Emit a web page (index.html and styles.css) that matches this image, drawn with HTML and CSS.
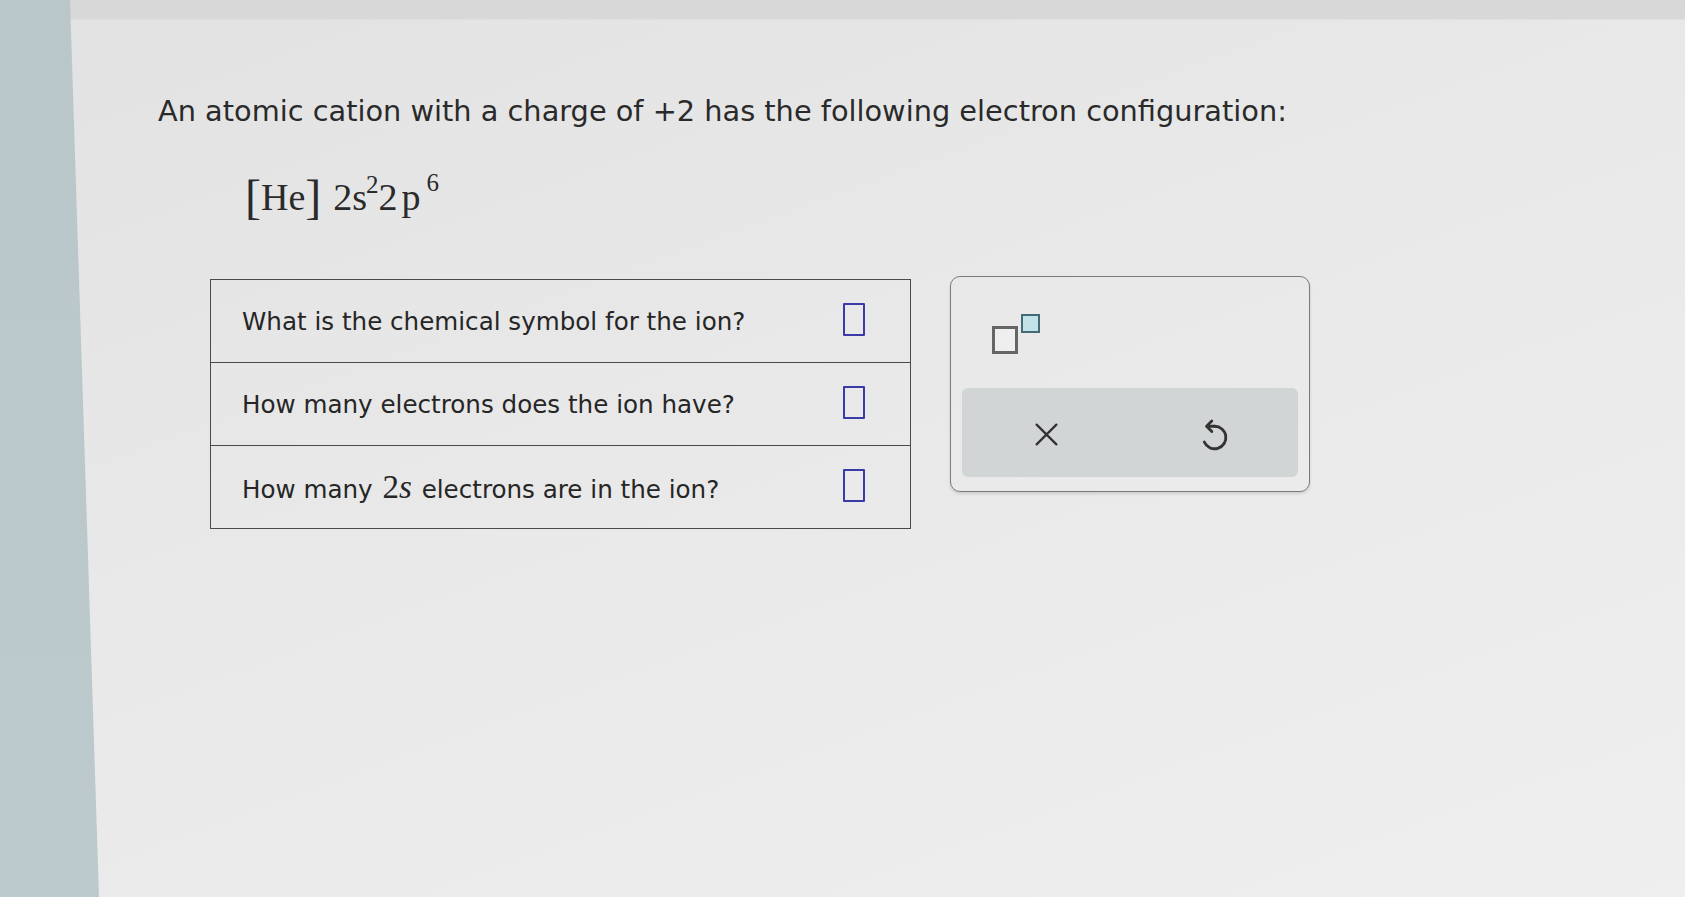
FILE: index.html
```html
<!DOCTYPE html>
<html>
<head>
<meta charset="utf-8">
<link rel="stylesheet" href="styles.css">
</head>
<body>
<div class="page">
  <div class="strip"></div>
  <div class="main">
    <div class="content">
      <p class="prompt">An atomic cation with a charge of <span class="num">+2</span> has the following electron configuration:</p>
      <div class="config"><span class="br">[</span>He<span class="br">]</span><span class="sp"></span>2s<sup>2</sup>2<span class="p">p</span><sup class="six">6</sup></div>
      <div class="work">
        <div class="qtable">
          <div class="row">
            <span class="q">What is the chemical symbol for the ion?</span>
            <span class="box"></span>
          </div>
          <div class="row">
            <span class="q">How many electrons does the ion have?</span>
            <span class="box"></span>
          </div>
          <div class="row">
            <span class="q">How many <span class="math">2<i>s</i></span> electrons are in the ion?</span>
            <span class="box"></span>
          </div>
        </div>
        <div class="panel">
          <div class="tools">
            <span class="supicon"><span class="base"></span><span class="exp"></span></span>
          </div>
          <div class="actions">
            <div class="act">
              <svg width="25" height="25" viewBox="0 0 24 24" fill="none" stroke="#333" stroke-width="2.2" stroke-linecap="round"><path d="M2.5 2.5 L21.5 21.5 M21.5 2.5 L2.5 21.5"/></svg>
            </div>
            <div class="act">
              <svg width="27" height="33" viewBox="3 3 18 22" fill="none" stroke="#333" stroke-width="1.9" stroke-linecap="round" stroke-linejoin="round"><path d="M12 8.5 A7.5 7.5 0 1 1 5.2 19"/><path d="M12 8.5 H7.5"/><path d="M10.2 5 L6.7 8.5 L10.2 12"/></svg>
            </div>
          </div>
        </div>
      </div>
    </div>
  </div>
</div>
</body>
</html>
```
FILE: styles.css
```css
html, body {
  margin: 0;
  padding: 0;
  width: 1685px;
  height: 897px;
  overflow: hidden;
}
.page {
  display: flex;
  width: 1685px;
  height: 897px;
  background:
    linear-gradient(180deg, #d7d7d7 0, #d9d9d9 19px, transparent 20px) no-repeat,
    linear-gradient(160deg, #e2e2e2 0%, #e8e8e8 40%, #efefef 100%);
}
.strip {
  width: 99px;
  flex: none;
  background: linear-gradient(180deg, #b9c7ca 0%, #bccacd 100%);
  clip-path: polygon(0 0, 70px 0, 99px 100%, 0 100%);
}
.main {
  flex: 1;
}
.content {
  padding: 20px 0 0 59px;
}
.prompt {
  margin: 73px 0 0 0;
  font-family: "DejaVu Sans", Verdana, sans-serif;
  font-size: 28.8px;
  line-height: 36px;
  color: #2a2a2a;
}
.config {
  margin: 44px 0 0 87px;
  height: 48px;
  font-family: "Liberation Serif", "Times New Roman", serif;
  font-size: 38px;
  line-height: 48px;
  color: #2a2a2a;
}
.config .br {
  font-size: 48px;
  vertical-align: -3px;
}
.config .sp {
  display: inline-block;
  width: 12px;
}
.config sup {
  font-size: 25px;
  vertical-align: 17px;
  line-height: 0;
  margin-left: -1px;
}
.config .p {
  margin-left: 4px;
}
.config .six {
  margin-left: 6px;
  vertical-align: 19px;
}
.work {
  display: flex;
  align-items: flex-start;
  margin: 58px 0 0 52px;
  gap: 39px;
}
.qtable {
  width: 699px;
  border: 1.5px solid #4a4a4a;
}
.row {
  height: 82px;
  display: flex;
  align-items: center;
  justify-content: space-between;
  padding: 0 45px 0 31px;
  border-top: 1.5px solid #4a4a4a;
}
.row:first-child {
  border-top: none;
}
.q {
  font-family: "DejaVu Sans", Verdana, sans-serif;
  font-size: 24.6px;
  color: #262626;
}
.math {
  font-family: "Liberation Serif", "Times New Roman", serif;
  font-size: 33px;
  margin: 0 2px;
}
.math i {
  font-style: italic;
}
.box {
  width: 18px;
  height: 29px;
  border: 2.5px solid #3a3aa8;
  border-radius: 1px;
  margin-top: -3px;
}
.panel {
  margin-top: -3px;
  width: 360px;
  height: 216px;
  border: 1.5px solid #7a7a7a;
  border-radius: 10px;
  display: flex;
  flex-direction: column;
  box-sizing: border-box;
  padding: 0 11px 14px 11px;
  box-shadow: 0 2px 3px rgba(0, 0, 0, 0.12);
}
.tools {
  height: 111px;
  padding: 37px 0 0 30px;
  box-sizing: border-box;
}
.supicon {
  display: inline-flex;
  align-items: flex-start;
  gap: 3px;
}
.base {
  width: 20px;
  height: 22px;
  border: 3px solid #666;
  margin-top: 12px;
  background: #efefef;
}
.exp {
  width: 15px;
  height: 15px;
  border: 2.5px solid #436b75;
  background: #c3e2e7;
}
.actions {
  flex: 1;
  display: flex;
  background: #d1d5d6;
  border-radius: 6px;
}
.act {
  flex: 1;
  display: flex;
  align-items: center;
  justify-content: center;
  padding-top: 4px;
}
```
